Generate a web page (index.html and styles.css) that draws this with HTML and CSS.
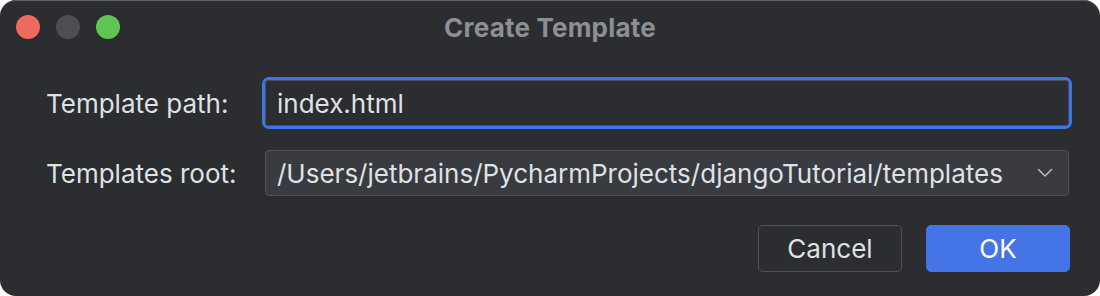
FILE: index.html
```html
<!DOCTYPE html>
<html lang="en">
<head>
    <meta charset="UTF-8">
    <meta name="viewport" content="width=device-width, initial-scale=1.0">
    <title>Create Template</title>
    <link rel="stylesheet" href="styles.css">
</head>
<body>
<div class="window">
    <!-- Title bar with traffic lights -->
    <div class="titlebar">
        <div class="lights">
            <span class="light close"></span>
            <span class="light minimize"></span>
            <span class="light zoom"></span>
        </div>
        <div class="title">Create Template</div>
    </div>

    <!-- Form -->
    <div class="form">
        <label class="label" for="path">Template path:</label>
        <div class="field focused">
            <input type="text" id="path" value="index.html">
        </div>

        <label class="label">Templates root:</label>
        <div class="field combo">
            <span class="combo-text">/Users/jetbrains/PycharmProjects/djangoTutorial/templates</span>
            <svg class="chevron" width="16" height="10" viewBox="0 0 16 10">
                <path d="M1.5 1.5 L8 8 L14.5 1.5" fill="none" stroke="#b4b8bf" stroke-width="1.6" stroke-linecap="round" stroke-linejoin="round"/>
            </svg>
        </div>
    </div>

    <!-- Buttons -->
    <div class="buttons">
        <button class="btn">Cancel</button>
        <button class="btn primary">OK</button>
    </div>
</div>
</body>
</html>
```

FILE: styles.css
```css
* {
    margin: 0;
    padding: 0;
    box-sizing: border-box;
}

body {
    background: #ffffff;
    font-family: 'Inter', 'Noto Sans', sans-serif;
    width: 1100px;
    height: 296px;
    overflow: hidden;
}

.window {
    width: 1100px;
    height: 296px;
    background: #2b2d30;
    border-radius: 16px;
    box-shadow: inset 0 1px 0 #5b5d61;
    color: #dfe1e5;
    display: flex;
    flex-direction: column;
}

/* Title bar */
.titlebar {
    height: 54px;
    position: relative;
    display: flex;
    align-items: center;
    justify-content: center;
}

.lights {
    position: absolute;
    left: 16px;
    top: 15px;
    display: flex;
    gap: 16px;
}

.light {
    width: 24px;
    height: 24px;
    border-radius: 50%;
    display: block;
}

.light.close { background: #ee6a5f; }
.light.minimize { background: #4d4e51; }
.light.zoom { background: #61c554; }

.title {
    font-size: 26px;
    font-weight: 700;
    color: #8e8f92;
    letter-spacing: 0.2px;
}

/* Form */
.form {
    display: grid;
    grid-template-columns: 219px 1fr;
    row-gap: 24px;
    align-items: center;
    padding: 26px 31px 0 46px;
}

.label {
    font-size: 26px;
    color: #dfe1e5;
}

.field {
    height: 46px;
    border: 1px solid #4e5157;
    border-radius: 4px;
    display: flex;
    align-items: center;
    padding: 0 11px;
}

.field.focused {
    border-color: #4a4d52;
    box-shadow: 0 0 0 3px #3d74e6;
}

.field input {
    width: 100%;
    background: transparent;
    border: none;
    outline: none;
    color: #dfe1e5;
    font-family: inherit;
    font-size: 26px;
}

.combo {
    background: #393b40;
    justify-content: space-between;
    padding-right: 15px;
}

.combo-text {
    font-size: 26px;
    color: #dfe1e5;
    white-space: nowrap;
}

/* Buttons */
.buttons {
    display: flex;
    justify-content: flex-end;
    gap: 24px;
    padding: 29px 30px 0 0;
}

.btn {
    width: 144px;
    height: 47px;
    border: 1px solid #4e5157;
    border-radius: 5px;
    background: transparent;
    color: #dfe1e5;
    font-family: inherit;
    font-size: 26px;
}

.btn.primary {
    background: #4574e6;
    border-color: #4574e6;
    color: #ffffff;
}
```
